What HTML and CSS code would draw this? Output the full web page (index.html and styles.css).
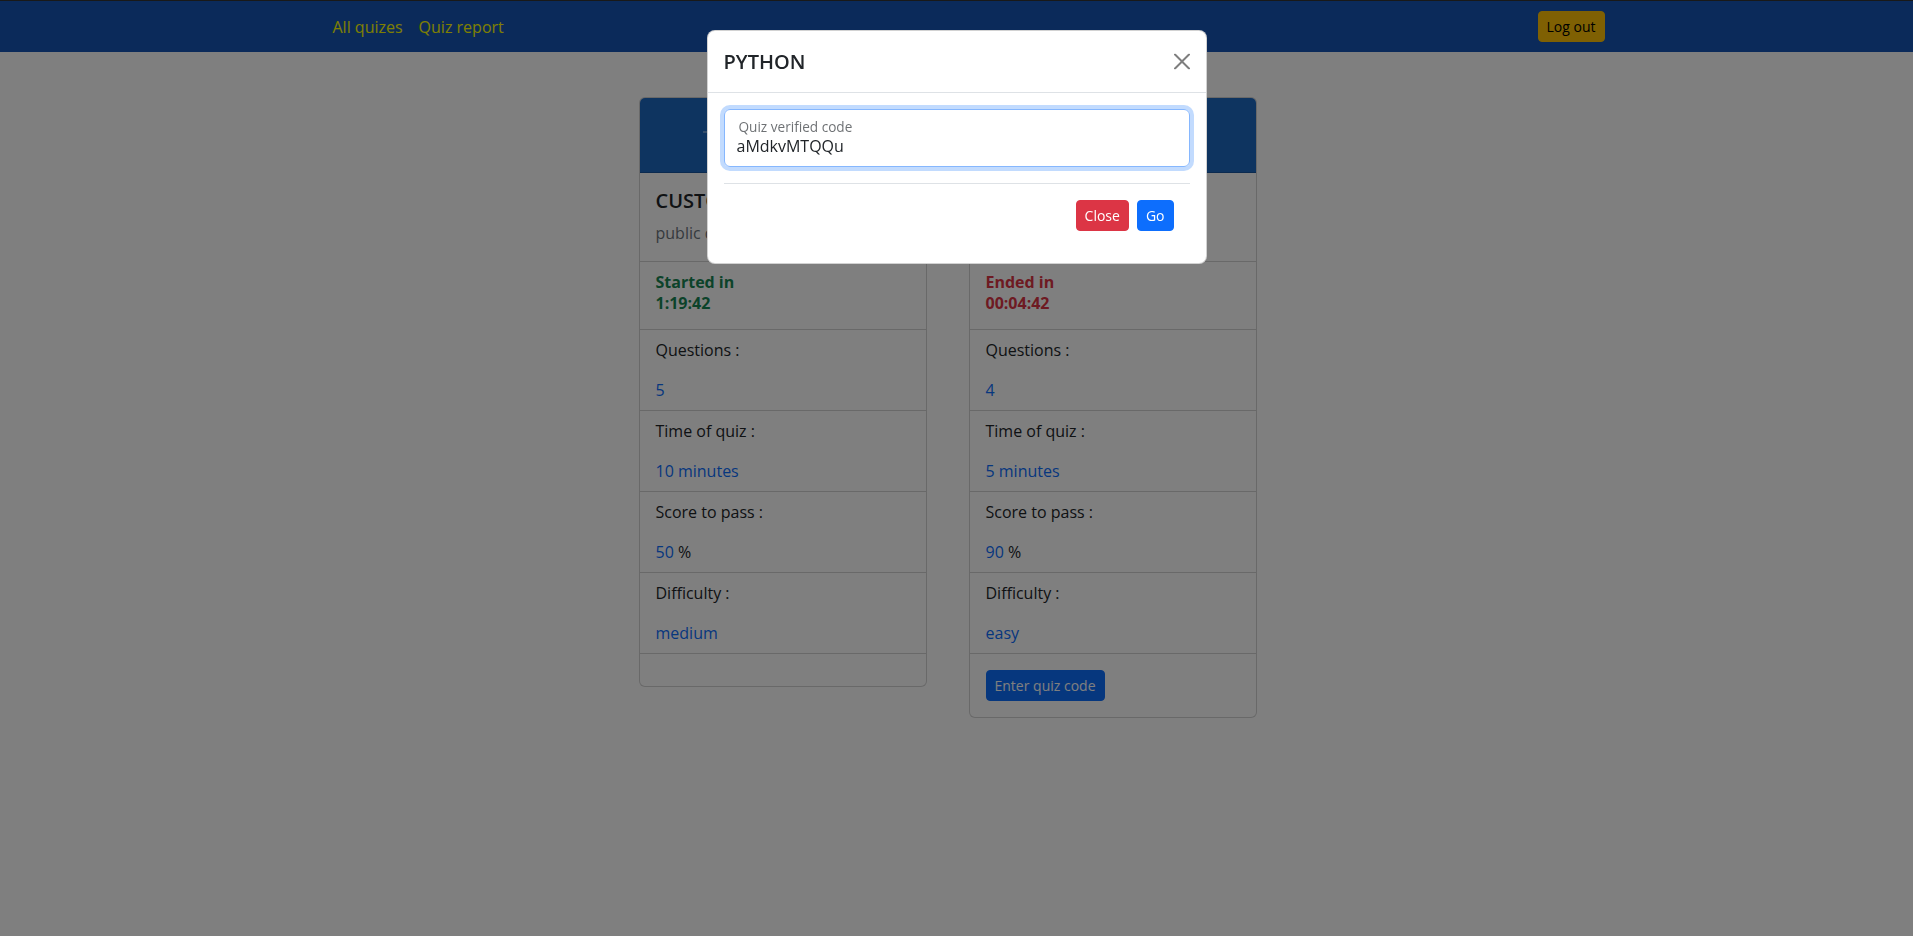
FILE: index.html
```html
<!DOCTYPE html>
<html lang="en">
<head>
<meta charset="utf-8">
<title>Quizzes</title>
<link rel="stylesheet" href="styles.css">
</head>
<body>
<nav class="navbar">
  <div class="nav-inner">
    <div class="nav-links">
      <a class="nav-link" href="#">All quizes</a>
      <a class="nav-link" href="#">Quiz report</a>
    </div>
    <button class="btn btn-sm btn-warning">Log out</button>
  </div>
</nav>

<main class="page">
  <div class="cards">
    <div class="col">
      <div class="card">
        <div class="card-header"><span class="hdr-line"></span></div>
        <div class="card-body">
          <h5 class="card-title">CUSTOM</h5>
          <p class="card-text">public quiz</p>
        </div>
        <div class="item status started">
          <div>Started in</div>
          <div>1:19:42</div>
        </div>
        <div class="item"><p>Questions :</p><span class="val">5</span></div>
        <div class="item"><p>Time of quiz :</p><span class="val">10 minutes</span></div>
        <div class="item"><p>Score to pass :</p><span class="val">50</span> %</div>
        <div class="item"><p>Difficulty :</p><span class="val">medium</span></div>
        <div class="card-foot"></div>
      </div>
    </div>
    <div class="col">
      <div class="card">
        <div class="card-header"><span class="hdr-line"></span></div>
        <div class="card-body">
          <h5 class="card-title">PYTHON</h5>
          <p class="card-text">private quiz</p>
        </div>
        <div class="item status ended">
          <div>Ended in</div>
          <div>00:04:42</div>
        </div>
        <div class="item"><p>Questions :</p><span class="val">4</span></div>
        <div class="item"><p>Time of quiz :</p><span class="val">5 minutes</span></div>
        <div class="item"><p>Score to pass :</p><span class="val">90</span> %</div>
        <div class="item"><p>Difficulty :</p><span class="val">easy</span></div>
        <div class="card-foot"><button class="btn btn-sm btn-primary">Enter quiz code</button></div>
      </div>
    </div>
  </div>
</main>

<div class="backdrop"></div>

<div class="modal">
  <div class="modal-dialog">
    <div class="modal-header">
      <h5 class="modal-title">PYTHON</h5>
      <button class="btn-close" aria-label="Close">
        <svg viewBox="0 0 16 16" width="16" height="16"><path d="M.293.293a1 1 0 0 1 1.414 0L8 6.586 14.293.293a1 1 0 1 1 1.414 1.414L9.414 8l6.293 6.293a1 1 0 0 1-1.414 1.414L8 9.414l-6.293 6.293a1 1 0 0 1-1.414-1.414L6.586 8 .293 1.707a1 1 0 0 1 0-1.414z"/></svg>
      </button>
    </div>
    <div class="modal-body">
      <div class="float-field">
        <label class="float-label" for="code">Quiz verified code</label>
        <input id="code" class="float-input" type="text" value="aMdkvMTQQu">
      </div>
      <div class="modal-footer">
        <button class="btn btn-sm btn-danger">Close</button>
        <button class="btn btn-sm btn-primary">Go</button>
      </div>
    </div>
  </div>
</div>
</body>
</html>
```
FILE: styles.css
```css
* { box-sizing: border-box; }

html, body {
  margin: 0;
  padding: 0;
}

body {
  font-family: "Open Sans", "Noto Sans", sans-serif;
  font-size: 16px;
  line-height: 24px;
  color: #212529;
  background: #fff;
  height: 936px;
  overflow: hidden;
}

/* ---------- navbar ---------- */
.navbar {
  height: 52px;
  background: #1655b5;
  border-top: 1px solid #333;
}

.nav-inner {
  width: 1320px;
  margin: 0 auto;
  padding: 0 12px;
  height: 51px;
  display: flex;
  align-items: center;
  justify-content: space-between;
}

.nav-links {
  display: flex;
  margin-left: 16px;
}

.nav-link {
  color: #ffff00;
  text-decoration: none;
  padding: 0 8px;
  line-height: 24px;
  font-weight: 500;
}

/* ---------- buttons ---------- */
.btn {
  font-family: inherit;
  border: 1px solid transparent;
  cursor: pointer;
}

.btn-sm {
  font-size: 14px;
  line-height: 21px;
  padding: 4px 8px;
  border-radius: 4px;
}

.btn-warning { background: #ffc107; border-color: #ffc107; color: #000; }
.btn-primary { background: #0d6efd; border-color: #0d6efd; color: #fff; }
.btn-danger  { background: #dc3545; border-color: #dc3545; color: #fff; }

/* ---------- cards ---------- */
.page {
  width: 1320px;
  margin: 44.7px auto 0;
}

.cards {
  display: flex;
  justify-content: center;
  align-items: flex-start;
}

.col {
  width: 330px;
  padding: 0 12px;
}

.card {
  width: 288px;
  border: 1px solid rgba(0, 0, 0, 0.175);
  border-radius: 6px;
  background: #fff;
}

.card-header {
  height: 75px;
  background: #1d68c0;
  border-bottom: 1px solid rgba(0, 0, 0, 0.175);
  border-radius: 5px 5px 0 0;
  display: flex;
  justify-content: center;
  align-items: center;
  padding-bottom: 6px;
}

.hdr-line {
  display: block;
  width: 160px;
  height: 2px;
  background: rgba(255, 255, 255, 0.35);
}

.card-body {
  padding: 16px;
}

.card-title {
  margin: 0 0 8px;
  font-size: 20px;
  line-height: 24px;
  font-weight: 600;
}

.card-text {
  margin: 0;
  color: #6c757d;
}

.item {
  border-top: 1px solid rgba(0, 0, 0, 0.175);
  padding: 8px 16px;
}

.item p {
  margin: 0 0 16px;
}

.val { color: #0d6efd; }

.status {
  font-weight: 700;
  line-height: 21.5px;
  padding-top: 10px;
  padding-bottom: 14px;
}

.started { color: #198754; }
.ended { color: #dc3545; }

.card-foot {
  border-top: 1px solid rgba(0, 0, 0, 0.175);
  padding: 16px;
  min-height: 33px;
}

.card-foot .btn { display: block; }

/* ---------- modal ---------- */
.backdrop {
  position: fixed;
  inset: 0;
  background: rgba(0, 0, 0, 0.5);
}

.modal {
  position: fixed;
  inset: 0;
}

.modal-dialog {
  width: 500px;
  margin: 29.5px auto 0;
  background: #fff;
  border: 1px solid rgba(0, 0, 0, 0.175);
  border-radius: 8px;
}

.modal-header {
  display: flex;
  align-items: center;
  padding: 16px;
  border-bottom: 1px solid #dee2e6;
}

.modal-title {
  margin: 0;
  font-size: 20px;
  line-height: 29px;
  font-weight: 600;
}

.btn-close {
  margin-left: auto;
  margin-right: 0;
  padding: 0;
  border: 0;
  background: none;
  width: 16px;
  height: 16px;
  display: flex;
  transform: translateY(0.5px);
}

.btn-close svg {
  fill: #000;
  opacity: 0.5;
}

.modal-body {
  padding: 16px;
}

.float-field {
  height: 58px;
  border: 1px solid #86b7fe;
  border-radius: 6px;
  box-shadow: 0 0 0 4px rgba(13, 110, 253, 0.25);
  padding: 8px 12px 0;
  margin-bottom: 16px;
}

.float-label {
  display: block;
  font-size: 13.6px;
  line-height: 17px;
  color: rgba(33, 37, 41, 0.65);
  padding-left: 2px;
}

.float-input {
  display: block;
  width: 100%;
  border: 0;
  outline: none;
  padding: 0;
  margin: -1px 0 0;
  font-family: inherit;
  font-size: 16px;
  line-height: 24px;
  height: 24px;
  color: #212529;
  background: transparent;
}

.modal-footer {
  border-top: 1px solid #dee2e6;
  padding: 12px;
  display: flex;
  justify-content: flex-end;
}

.modal-footer .btn {
  margin: 4px;
}
```
